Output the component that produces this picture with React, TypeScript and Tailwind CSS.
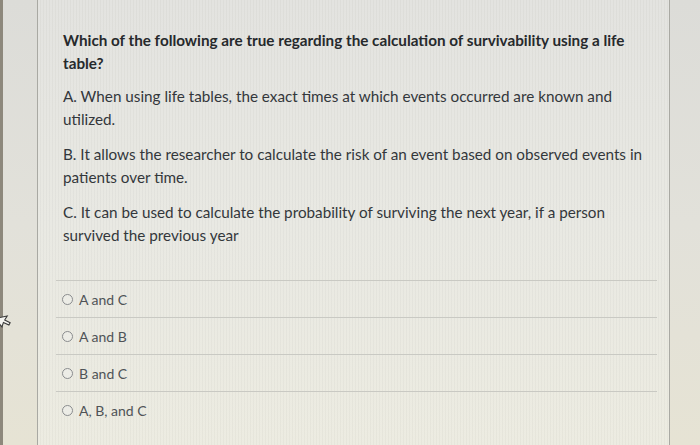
import React from "react";

const options = ["A and C", "A and B", "B and C", "A, B, and C"];

export default function App() {
  return (
    <div className="relative w-[700px] h-[445px] overflow-hidden flex bg-[linear-gradient(180deg,#dcdcd8_0%,#e2e1da_50%,#e6e3d4_100%)]" style={{ fontFamily: "Lato, 'Open Sans', sans-serif" }}>
      <div className="w-[3px] shrink-0 bg-[#8d887c]" />
      <div className="w-[34px] shrink-0" />
      <div className="w-[633px] shrink-0 border-x border-[#a9a9a3] bg-[image:repeating-linear-gradient(90deg,rgba(255,255,255,0.08)_0px,rgba(255,255,255,0.08)_2px,rgba(0,0,0,0.02)_2px,rgba(0,0,0,0.02)_3px),linear-gradient(180deg,#e1e1dd_0%,#e7e7e1_50%,#ebeadf_100%)]">
        <div className="pl-[25px] pt-[29px] w-[620px] text-[15.25px] leading-[23px]">
          <p className="font-bold text-[#26292c] mb-[10px]">
            Which of the following are true regarding the calculation of survivability using a life table?
          </p>
          <p className="text-[#33373b] mb-[12px]">
            A. When using life tables, the exact times at which events occurred are known and utilized.
          </p>
          <p className="text-[#33373b] mb-[12px]">
            B. It allows the researcher to calculate the risk of an event based on observed events in patients over time.
          </p>
          <p className="text-[#33373b]">
            C. It can be used to calculate the probability of surviving the next year, if a person survived the previous year
          </p>
        </div>
        <div className="mt-[33px] ml-[18px] mr-[12px]">
          {options.map((o) => (
            <div key={o} className="h-[37px] border-t border-[#c9c9c3] flex items-center pl-[6px] gap-[6px]">
              <span className="w-[11px] h-[11px] rounded-full border border-[#8a8c8e] bg-[#ecece6]" />
              <span className="text-[14px] text-[#4f5357]">{o}</span>
            </div>
          ))}
        </div>
      </div>
      <svg className="absolute left-[-3px] top-[310px]" width="16" height="20" viewBox="0 0 16 20">
        <path d="M1 3 L12 9 L7.5 10.5 L10 16 L7.5 17 L5 11.5 L1 14 Z" fill="#f4f4f0" stroke="#3a3a3a" strokeWidth="1.1" transform="rotate(-40 7 10)" />
      </svg>
    </div>
  );
}
